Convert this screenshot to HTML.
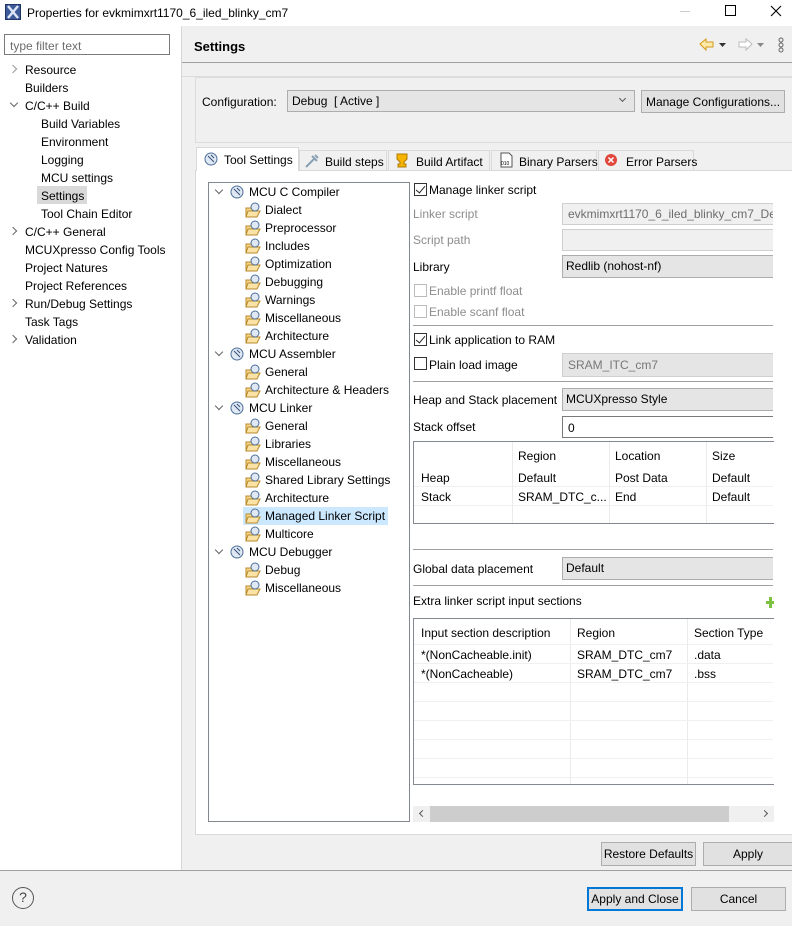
<!DOCTYPE html>
<html><head><meta charset="utf-8"><style>
*{margin:0;padding:0;box-sizing:border-box}
body{width:792px;height:926px;overflow:hidden;background:#f0f0f0;font-family:"Liberation Sans",sans-serif;font-size:12px;color:#000;position:relative}
.a{position:absolute;white-space:nowrap;line-height:18px;transform:translateY(1px)}
.b{position:absolute}
.g{color:#8d8d8d}
.fld{position:absolute;border:1px solid #cfcfcf;background:#f0f0f0;line-height:20px;padding-left:5px;white-space:nowrap;overflow:hidden;color:#6d6d6d}
.cmb{position:absolute;border:1px solid #adadad;background:#e5e5e5;line-height:21px;padding-left:3px;white-space:nowrap;overflow:hidden}
.btn{position:absolute;border:1px solid #adadad;background:#e1e1e1;text-align:center;line-height:22px}
.cb{position:absolute;width:13px;height:13px;border:1px solid #333;background:#fff}
.cb.d{border-color:#bcbcbc}
.cb.c::after{content:"";position:absolute;left:3px;top:0px;width:4px;height:8px;border:solid #222;border-width:0 1.5px 1.5px 0;transform:rotate(40deg)}
.sep{position:absolute;height:1px;background:#a0a0a0}
.ic{position:absolute;width:16px;height:16px}
.arr{position:absolute;width:6px;height:6px;border:solid #666;border-width:0 1.3px 1.3px 0}
</style></head><body>
<div class="b" style="left:0;top:0;width:792px;height:26px;background:#fff"></div>
<div class="b" style="left:5px;top:4px;width:16px;height:16px;background:#3d5a99;border:1px solid #1f3366"></div>
<svg class="b" style="left:5px;top:4px" width="16" height="16"><path d="M3 2 L13 14 M13 2 L3 14" stroke="#dfe6f5" stroke-width="2.4"/></svg>
<div class="a" style="left:27px;top:3px">Properties for evkmimxrt1170_6_iled_blinky_cm7</div>
<div class="b" style="left:680px;top:11px;width:10px;height:1px;background:#ccc"></div>
<div class="b" style="left:725px;top:5px;width:11px;height:11px;border:1px solid #000"></div>
<svg class="b" style="left:770px;top:5px" width="12" height="12"><path d="M1 1L11 11M11 1L1 11" stroke="#000" stroke-width="1.1"/></svg>

<div class="b" style="left:0;top:26px;width:181px;height:844px;background:#fff"></div>
<div class="b" style="left:181px;top:26px;width:1px;height:844px;background:#d6d6d6"></div>
<div class="b" style="left:4px;top:34px;width:166px;height:21px;border:1px solid #7a7a7a;background:#fff"></div>
<div class="a g" style="left:10px;top:36px;color:#6d6d6d">type filter text</div>
<div class="arr" style="left:10px;top:66px;transform:rotate(-45deg);border-color:#999"></div>
<div class="a" style="left:25px;top:60px">Resource</div>
<div class="a" style="left:25px;top:78px">Builders</div>
<div class="arr" style="left:11px;top:100px;transform:rotate(45deg)"></div>
<div class="a" style="left:25px;top:96px">C/C++ Build</div>
<div class="a" style="left:41px;top:114px">Build Variables</div>
<div class="a" style="left:41px;top:132px">Environment</div>
<div class="a" style="left:41px;top:150px">Logging</div>
<div class="a" style="left:41px;top:168px">MCU settings</div>
<div class="b" style="left:37px;top:186px;width:50px;height:18px;background:#d9d9d9"></div>
<div class="a" style="left:41px;top:186px">Settings</div>
<div class="a" style="left:41px;top:204px">Tool Chain Editor</div>
<div class="arr" style="left:10px;top:228px;transform:rotate(-45deg)"></div>
<div class="a" style="left:25px;top:222px">C/C++ General</div>
<div class="a" style="left:25px;top:240px">MCUXpresso Config Tools</div>
<div class="a" style="left:25px;top:258px">Project Natures</div>
<div class="a" style="left:25px;top:276px">Project References</div>
<div class="arr" style="left:10px;top:300px;transform:rotate(-45deg)"></div>
<div class="a" style="left:25px;top:294px">Run/Debug Settings</div>
<div class="a" style="left:25px;top:312px">Task Tags</div>
<div class="arr" style="left:10px;top:336px;transform:rotate(-45deg)"></div>
<div class="a" style="left:25px;top:330px">Validation</div>

<div class="a" style="left:194px;top:37px;font-weight:bold;font-size:13px">Settings</div>
<svg class="b" style="left:698px;top:37px" width="90" height="16"><path d="M2 7 L8 2 L8 5 L15 5 L15 10 L8 10 L8 13 Z" fill="#fde9a8" stroke="#d59a1b"/><path d="M21 6h7l-3.5 4z" fill="#333"/><path d="M54 7 L48 2 L48 5 L41 5 L41 10 L48 10 L48 13 Z" fill="#fff" stroke="#bbb"/><path d="M59 6h7l-3.5 4z" fill="#888"/><circle cx="83" cy="3" r="2" fill="none" stroke="#666"/><circle cx="83" cy="8" r="2" fill="none" stroke="#666"/><circle cx="83" cy="13" r="2" fill="none" stroke="#666"/></svg>
<div class="sep" style="left:182px;top:62px;width:610px;background:#a0a0a0"></div>
<div class="b" style="left:182px;top:76px;width:610px;height:1px;background:#dcdcdc"></div>
<div class="b" style="left:195px;top:77px;width:597px;height:66px;border:1px solid #dcdcdc;border-right:none"></div>
<div class="a" style="left:202px;top:92px">Configuration:</div>
<div class="cmb" style="left:287px;top:90px;width:348px;height:22px;padding-left:4px;line-height:20px">Debug&nbsp; [ Active ]</div>
<div class="arr" style="left:620px;top:96px;transform:rotate(45deg);border-color:#555;width:5px;height:5px"></div>
<div class="btn" style="left:641px;top:90px;width:144px;height:23px">Manage Configurations...</div>

<div class="b" style="left:195px;top:170px;width:597px;height:665px;background:#fff;border:1px solid #d9d9d9;border-right:none"></div>
<div class="b" style="left:196px;top:147px;width:103px;height:24px;background:#fff;border:1px solid #d9d9d9;border-bottom:none"></div>
<svg class="ic" style="left:203px;top:151px"><circle cx="8" cy="8" r="6" fill="#dfe8f3" stroke="#4d6f99"/><path d="M5 5l6 6M8 4l3 3" stroke="#34507a"/></svg>
<div class="a" style="left:224px;top:150px">Tool Settings</div>
<div class="b" style="left:299px;top:150px;width:88px;height:21px;border:1px solid #d9d9d9;border-bottom:none"></div>
<svg class="ic" style="left:304px;top:153px"><path d="M2 14 L10 6 M8 3l5 5 M11 2l3 3" stroke="#8aa0b5" stroke-width="2"/></svg>
<div class="a" style="left:325px;top:152px">Build steps</div>
<div class="b" style="left:388px;top:150px;width:102px;height:21px;border:1px solid #d9d9d9;border-bottom:none"></div>
<svg class="ic" style="left:394px;top:152px"><path d="M3 2h10v5l-3 3v2h2v3H4v-3h2v-2L3 7z" fill="#f4b400" stroke="#b07a00"/></svg>
<div class="a" style="left:416px;top:152px">Build Artifact</div>
<div class="b" style="left:491px;top:150px;width:106px;height:21px;border:1px solid #d9d9d9;border-bottom:none"></div>
<svg class="ic" style="left:498px;top:152px"><path d="M3 1h8l3 3v11H3z" fill="#fff" stroke="#555"/><text x="3" y="13" font-size="5" font-family="Liberation Sans">010</text></svg>
<div class="a" style="left:519px;top:152px">Binary Parsers</div>
<div class="b" style="left:598px;top:150px;width:96px;height:21px;border:1px solid #d9d9d9;border-bottom:none"></div>
<svg class="ic" style="left:604px;top:153px"><circle cx="7" cy="7" r="6" fill="#e0463a"/><path d="M4.5 4.5l5 5M9.5 4.5l-5 5" stroke="#fff" stroke-width="1.5"/></svg>
<div class="a" style="left:626px;top:152px">Error Parsers</div>

<div class="b" style="left:208px;top:182px;width:202px;height:640px;border:1px solid #828790;background:#fff"></div>
<div class="b" style="left:243px;top:507px;width:145px;height:18px;background:#cce8ff"></div>
<div id="tree"></div>

<div class="cb c" style="left:414px;top:183px"></div>
<div class="a" style="left:429px;top:180px">Manage linker script</div>
<div class="a g" style="left:413px;top:204px">Linker script</div>
<div class="fld" style="left:562px;top:203px;width:211px;height:22px;border-right:none">evkmimxrt1170_6_iled_blinky_cm7_Debug.ld</div>
<div class="a g" style="left:413px;top:230px">Script path</div>
<div class="fld" style="left:562px;top:229px;width:211px;height:22px;border-right:none"></div>
<div class="a" style="left:413px;top:257px">Library</div>
<div class="cmb" style="left:562px;top:255px;width:211px;height:23px;border-right:none">Redlib (nohost-nf)</div>
<div class="cb d" style="left:414px;top:284px"></div>
<div class="a g" style="left:429px;top:281px">Enable printf float</div>
<div class="cb d" style="left:414px;top:305px"></div>
<div class="a g" style="left:429px;top:302px">Enable scanf float</div>
<div class="sep" style="left:413px;top:325px;width:360px"></div>
<div class="cb c" style="left:414px;top:333px"></div>
<div class="a" style="left:429px;top:330px">Link application to RAM</div>
<div class="cb" style="left:414px;top:357px"></div>
<div class="a" style="left:429px;top:355px">Plain load image</div>
<div class="fld" style="left:562px;top:353px;width:211px;height:24px;background:#e5e5e5;line-height:22px;border-right:none;color:#777">SRAM_ITC_cm7</div>
<div class="sep" style="left:413px;top:381px;width:360px"></div>
<div class="a" style="left:413px;top:390px">Heap and Stack placement</div>
<div class="cmb" style="left:562px;top:388px;width:211px;height:23px;border-right:none">MCUXpresso Style</div>
<div class="a" style="left:413px;top:417px">Stack offset</div>
<div class="b" style="left:562px;top:416px;width:211px;height:22px;border:1px solid #7a7a7a;border-right:none;background:#fff"></div>
<div class="a" style="left:568px;top:418px">0</div>
<div class="b" style="left:413px;top:441px;width:361px;height:83px;border:1px solid #828790;border-right:none"></div>
<div class="b" style="left:512px;top:442px;width:1px;height:81px;background:#eaeaea"></div>
<div class="b" style="left:609px;top:442px;width:1px;height:81px;background:#eaeaea"></div>
<div class="b" style="left:706px;top:442px;width:1px;height:81px;background:#eaeaea"></div>
<div class="b" style="left:414px;top:486px;width:359px;height:1px;background:#f0f0f0"></div>
<div class="b" style="left:414px;top:505px;width:359px;height:1px;background:#f0f0f0"></div>
<div class="a" style="left:518px;top:446px">Region</div><div class="a" style="left:615px;top:446px">Location</div><div class="a" style="left:712px;top:446px">Size</div>
<div class="a" style="left:421px;top:468px">Heap</div><div class="a" style="left:518px;top:468px">Default</div><div class="a" style="left:615px;top:468px">Post Data</div><div class="a" style="left:712px;top:468px">Default</div>
<div class="a" style="left:421px;top:487px">Stack</div><div class="a" style="left:518px;top:487px">SRAM_DTC_c...</div><div class="a" style="left:615px;top:487px">End</div><div class="a" style="left:712px;top:487px">Default</div>
<div class="sep" style="left:413px;top:549px;width:360px"></div>
<div class="a" style="left:413px;top:559px">Global data placement</div>
<div class="cmb" style="left:562px;top:557px;width:211px;height:23px;border-right:none">Default</div>
<div class="sep" style="left:413px;top:585px;width:360px"></div>
<div class="a" style="left:413px;top:591px">Extra linker script input sections</div>
<svg class="b" style="left:766px;top:597px" width="8" height="12"><path d="M3 0h3v4h2v3H6v4H3V7H0V4h3z" fill="#7cc242"/></svg>
<div class="b" style="left:413px;top:618px;width:361px;height:167px;border:1px solid #828790;border-right:none"></div>
<div class="b" style="left:570px;top:619px;width:1px;height:165px;background:#eaeaea"></div>
<div class="b" style="left:687px;top:619px;width:1px;height:165px;background:#eaeaea"></div>
<div id="rows"></div>
<div class="a" style="left:421px;top:623px">Input section description</div><div class="a" style="left:577px;top:623px">Region</div><div class="a" style="left:694px;top:623px">Section Type</div>
<div class="a" style="left:421px;top:645px">*(NonCacheable.init)</div><div class="a" style="left:577px;top:645px">SRAM_DTC_cm7</div><div class="a" style="left:694px;top:645px">.data</div>
<div class="a" style="left:421px;top:664px">*(NonCacheable)</div><div class="a" style="left:577px;top:664px">SRAM_DTC_cm7</div><div class="a" style="left:694px;top:664px">.bss</div>
<div class="b" style="left:413px;top:806px;width:361px;height:16px;background:#f0f0f0"></div>
<div class="b" style="left:430px;top:806px;width:299px;height:16px;background:#cdcdcd"></div>
<div class="arr" style="left:420px;top:811px;transform:rotate(135deg);border-color:#555;width:5px;height:5px"></div>
<div class="arr" style="left:762px;top:811px;transform:rotate(-45deg);border-color:#555;width:5px;height:5px"></div>

<div class="btn" style="left:601px;top:842px;width:95px;height:24px">Restore Defaults</div>
<div class="btn" style="left:703px;top:842px;width:90px;height:24px">Apply</div>
<div class="b" style="left:0;top:870px;width:792px;height:1px;background:#a0a0a0"></div>
<div class="b" style="left:12px;top:887px;width:22px;height:22px;border:1.5px solid #555;border-radius:50%;text-align:center;line-height:19px;font-size:14px;color:#444">?</div>
<div class="btn" style="left:587px;top:887px;width:96px;height:24px;border:2px solid #0078d7;line-height:21px">Apply and Close</div>
<div class="btn" style="left:691px;top:887px;width:95px;height:24px">Cancel</div>

<script>
var t=[[0,"MCU C Compiler"],[1,"Dialect"],[1,"Preprocessor"],[1,"Includes"],[1,"Optimization"],[1,"Debugging"],[1,"Warnings"],[1,"Miscellaneous"],[1,"Architecture"],[0,"MCU Assembler"],[1,"General"],[1,"Architecture & Headers"],[0,"MCU Linker"],[1,"General"],[1,"Libraries"],[1,"Miscellaneous"],[1,"Shared Library Settings"],[1,"Architecture"],[1,"Managed Linker Script"],[1,"Multicore"],[0,"MCU Debugger"],[1,"Debug"],[1,"Miscellaneous"]];
var h="";t.forEach(function(r,i){var y=182+18*i;
if(r[0]==0){h+='<div class="arr" style="left:216px;top:'+(y+5)+'px;transform:rotate(45deg)"></div><svg class="ic" style="left:229px;top:'+(y+2)+'px"><circle cx="8" cy="8" r="6" fill="#dfe8f3" stroke="#4d6f99"/><path d="M5 5l6 6M8 4l3 3" stroke="#34507a"/></svg><div class="a" style="left:249px;top:'+y+'px">'+r[1]+'</div>';}
else{h+='<svg class="ic" style="left:245px;top:'+(y+2)+'px"><path d="M1 6h9l-2 9H1z" fill="#f6d58a" stroke="#b88a2c"/><path d="M3 9h12l-3 6H1z" fill="#fbe3a6" stroke="#b88a2c"/><circle cx="10" cy="5" r="4" fill="#dfe8f3" stroke="#4d6f99"/></svg><div class="a" style="left:265px;top:'+y+'px">'+r[1].replace("&","&amp;")+'</div>';}});
document.getElementById("tree").innerHTML=h;
var s="";for(var y=644;y<784;y+=19){s+='<div class="b" style="left:414px;top:'+y+'px;width:359px;height:1px;background:#f0f0f0"></div>';}
document.getElementById("rows").innerHTML=s;
</script>
</body></html>
